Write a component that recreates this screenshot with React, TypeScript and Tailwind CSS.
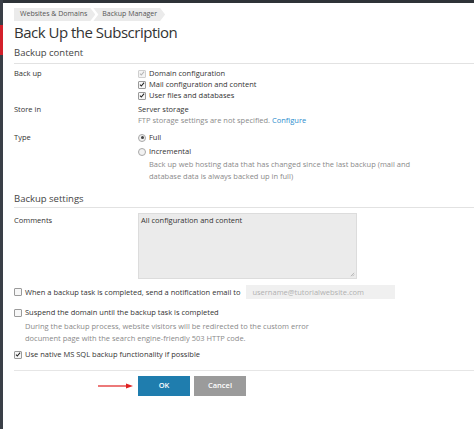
import React from "react";

const Check = ({ checked = false, disabled = false }: { checked?: boolean; disabled?: boolean }) => (
  <span
    className={`inline-flex items-center justify-center w-[8px] h-[8px] border ${
      disabled ? "border-[#cfcfcf] bg-[#f4f4f4]" : "border-[#9a9a9a] bg-[#f7f7f7]"
    } rounded-[1px] shrink-0`}
  >
    {checked && (
      <svg viewBox="0 0 8 8" className="w-[7px] h-[7px]">
        <path d="M1.3 4.2 L3.1 6 L6.8 1.6" fill="none" stroke={disabled ? "#b5b5b5" : "#222"} strokeWidth="1.4" />
      </svg>
    )}
  </span>
);

const Radio = ({ checked = false }: { checked?: boolean }) => (
  <span className="inline-flex items-center justify-center w-[8px] h-[8px] rounded-full border border-[#a8a8a8] bg-[#f2f2f2] shrink-0">
    {checked && <span className="w-[3px] h-[3px] rounded-full bg-[#444]" />}
  </span>
);

export default function App() {
  return (
    <div
      className="w-[474px] h-[429px] bg-white flex overflow-hidden text-[#333]"
      style={{ fontFamily: '"Open Sans", "Noto Sans", sans-serif' }}
    >
      <div className="w-[3px] h-full bg-[#3a3f47] flex flex-col">
        <div className="h-[25px]" />
        <div className="h-[30px] bg-[#d3202a]" />
      </div>
      <div className="flex-1 flex flex-col">
        <div className="h-[3px] bg-[#2e3338]" />
        <div className="pl-[11px] flex flex-col">
          {/* breadcrumbs */}
          <div className="flex mt-[5px] h-[13px] text-[7px] text-[#555]">
            <div className="bg-[#ebebeb] h-full flex items-center pl-[6px] pr-[8px] [clip-path:polygon(0_0,calc(100%-5px)_0,100%_50%,calc(100%-5px)_100%,0_100%)]">
              Websites &amp; Domains
            </div>
            <div className="bg-[#ebebeb] h-full flex items-center pl-[9px] pr-[8px] -ml-[2px] [clip-path:polygon(0_0,calc(100%-5px)_0,100%_50%,calc(100%-5px)_100%,0_100%,5px_50%)]">
              Backup Manager
            </div>
          </div>
          {/* title */}
          <div className="text-[15px] tracking-[-0.5px] leading-[20px] mt-[1px] text-[#333]">Back Up the Subscription</div>
          {/* section 1 */}
          <div className="mt-[4px] text-[9.5px] leading-[13px] text-[#444] pb-[4px] border-b border-[#e2e2e2]">
            Backup content
          </div>
          <div className="flex flex-col text-[7.5px] leading-[11px]">
            <div className="flex mt-[4px]">
              <div className="w-[124px]">Back up</div>
              <div className="flex flex-col">
                <div className="flex items-center gap-[3px]"><Check checked disabled /> Domain configuration</div>
                <div className="flex items-center gap-[3px]"><Check checked /> Mail configuration and content</div>
                <div className="flex items-center gap-[3px]"><Check checked /> User files and databases</div>
              </div>
            </div>
            <div className="flex mt-[3px]">
              <div className="w-[124px]">Store in</div>
              <div className="flex flex-col">
                <div>Server storage</div>
                <div className="text-[#8a8a8a]">
                  FTP storage settings are not specified. <span className="text-[#2b8dcd]">Configure</span>
                </div>
              </div>
            </div>
            <div className="flex mt-[6px]">
              <div className="w-[124px]">Type</div>
              <div className="flex flex-col">
                <div className="flex items-center gap-[3px]"><Radio checked /> Full</div>
                <div className="flex items-center gap-[3px] mt-[3px]"><Radio /> Incremental</div>
                <div className="text-[#8a8a8a] pl-[11px] leading-[12px] w-[300px] mt-[1px]">
                  Back up web hosting data that has changed since the last backup (mail and database data is always backed up in full)
                </div>
              </div>
            </div>
          </div>
          {/* section 2 */}
          <div className="mt-[10px] text-[9.5px] leading-[13px] text-[#444] pb-[2px] border-b border-[#e2e2e2]">
            Backup settings
          </div>
          <div className="flex flex-col text-[7.5px] leading-[11px]">
            <div className="flex mt-[5px]">
              <div className="w-[124px] pt-[2px]">Comments</div>
              <div className="relative w-[219px] h-[66px] bg-[#ebebeb] border border-[#dcdcdc] px-[2px] py-[1px]">
                All configuration and content
                <svg viewBox="0 0 6 6" className="absolute right-[1px] bottom-[1px] w-[5px] h-[5px]">
                  <path d="M5 1 L1 5 M5 3 L3 5" stroke="#999" strokeWidth="0.7" />
                </svg>
              </div>
            </div>
            <div className="flex items-center mt-[6px] gap-[3px]">
              <Check />
              <span>When a backup task is completed, send a notification email to</span>
              <div className="ml-[3px] w-[149px] h-[14px] bg-[#f0f0f0] flex items-center px-[6px] text-[#b0b0b0]">
                username@tutorialwebsite.com
              </div>
            </div>
            <div className="flex items-center mt-[8px] gap-[3px]">
              <Check />
              <span>Suspend the domain until the backup task is completed</span>
            </div>
            <div className="text-[#8a8a8a] pl-[11px] leading-[12px] w-[330px] mt-[2px]">
              During the backup process, website visitors will be redirected to the custom error document page with the search engine-friendly 503 HTTP code.
            </div>
            <div className="flex items-center mt-[5px] gap-[3px]">
              <Check checked />
              <span>Use native MS SQL backup functionality if possible</span>
            </div>
          </div>
          <div className="mt-[10px] border-b border-[#e6e6e6]" />
          <div className="flex items-center mt-[5px]">
            <div className="w-[124px] flex justify-end pr-[4px]">
              <svg viewBox="0 0 36 6" className="w-[36px] h-[6px]">
                <path d="M0 3 L30 3" stroke="#e02020" strokeWidth="1.2" />
                <path d="M28 0.5 L35 3 L28 5.5 Z" fill="#e02020" />
              </svg>
            </div>
            <div className="w-[52px] h-[20px] bg-[#1f7dae] text-white text-[7.5px] font-semibold flex items-center justify-center">
              OK
            </div>
            <div className="w-[52px] h-[20px] ml-[4px] bg-[#9b9b9b] text-white text-[7.5px] font-semibold flex items-center justify-center">
              Cancel
            </div>
          </div>
        </div>
      </div>
    </div>
  );
}
